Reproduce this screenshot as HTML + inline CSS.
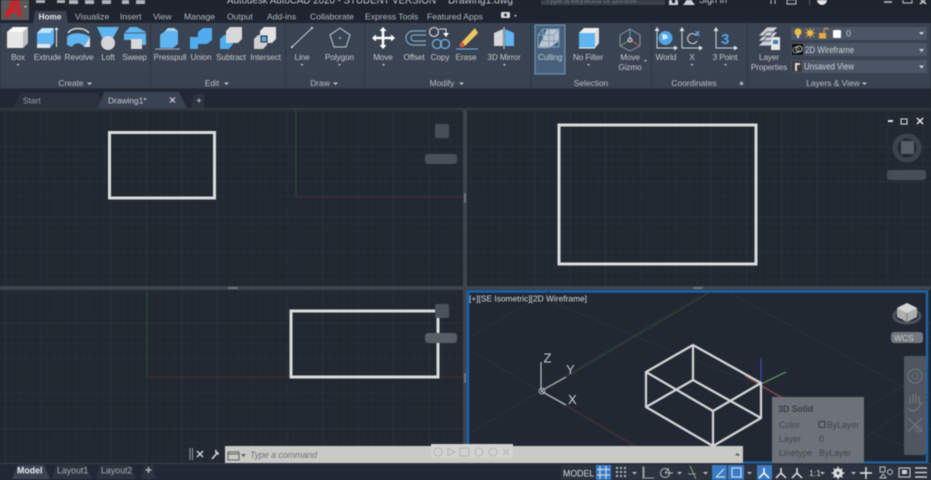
<!DOCTYPE html>
<html><head><meta charset="utf-8">
<style>
html,body{margin:0;padding:0;background:#212830;width:931px;height:480px;overflow:hidden}
svg{display:block;filter:blur(.5px)}
text{font-family:"Liberation Sans",sans-serif;font-size:8.4px;fill:#d2d6da}
.c{text-anchor:middle}
.t{fill:#b4bac2;font-size:8.6px}
.l{fill:#c4c9ce;font-size:8.2px;letter-spacing:-.1px}
.w{fill:none;stroke:#dcdcdc;stroke-width:3}
.g{fill:none;stroke:#d6d6d6;stroke-width:2.2;stroke-linejoin:round}
</style></head><body>
<svg width="931" height="480" viewBox="0 0 931 480" xmlns="http://www.w3.org/2000/svg">
<defs>
<pattern id="grid" width="35.3" height="35.3" patternUnits="userSpaceOnUse" x="5" y="5">
<path d="M7 0V35M14 0V35M21 0V35M28 0V35M0 7H35M0 14H35M0 21H35M0 28H35" stroke="#252c35" stroke-width="1" fill="none"/>
<path d="M0 0V35.3M0 0H35.3" stroke="#303843" stroke-width="1" fill="none"/>
</pattern>
</defs>
<rect width="931" height="480" fill="#212830"/>
<!-- title bar -->
<rect width="931" height="23" fill="#1e232c"/>
<rect x="0" y="10" width="931" height="13" fill="#1f2530"/>
<!-- logo -->
<rect x="1" y="0" width="28" height="20" fill="#59595a"/>
<path d="M4 17L12 0H19L22 17H18L17.300 12.500H12.500L10 17ZM14 9.500H17L16 3.500Z" fill="#c7242b"/>
<path d="M24 6h3l-1.500 2z" fill="#d0d0d0"/>
<g fill="#b0b4b9">
<rect x="36" y="0" width="9" height="3"/><rect x="57" y="0" width="8" height="3"/><rect x="69" y="0" width="9" height="4"/><rect x="85" y="0" width="9" height="4"/><rect x="102" y="0" width="9" height="4"/><rect x="122" y="0" width="7" height="4"/><rect x="136" y="0" width="9" height="4"/>
</g>
<text x="227" y="3.500" textLength="209" lengthAdjust="spacingAndGlyphs" style="font-size:10px;fill:#c9cdd2">Autodesk AutoCAD 2020 - STUDENT VERSION</text>
<text x="448" y="3.500" textLength="65" lengthAdjust="spacingAndGlyphs" style="font-size:10px;fill:#c9cdd2">Drawing1.dwg</text>
<rect x="541" y="0" width="124" height="5" fill="#39404c"/>
<text x="545" y="3" style="font-size:8px;fill:#6f7782">Type a keyword or phrase</text>
<path d="M669 0H672V3H675V0H678V5H669ZM686 0H692V1L695 5H683L686 1Z" fill="#d0d3d6"/>
<text x="699" y="3" style="font-size:9px">Sign In</text>
<path d="M771 0V4M775 0V4M787 0H796V4H787Z" stroke="#c6cace" fill="none"/>
<rect x="809" y="0" width="1" height="5" fill="#555d68"/>
<circle cx="822" cy="0" r="5" fill="#e2e4e6"/>
<path d="M884 2H892" stroke="#ccc" stroke-width="1.500"/><rect x="903" y="-3" width="9" height="6" fill="none" stroke="#ccc"/><path d="M920 -1L926 4M926 -1L920 4" stroke="#ccc" stroke-width="1.500"/>
<!-- menu tabs -->
<path d="M33 23L35 11H66L68 23Z" fill="#3a4352"/>
<text x="50" y="19.500" class="c" style="fill:#e8eaec;font-weight:bold;font-size:8.200px">Home</text>
<text x="75" y="19.500" class="t">Visualize</text>
<text x="120" y="19.500" class="t">Insert</text>
<text x="153" y="19.500" class="t">View</text>
<text x="184" y="19.500" class="t">Manage</text>
<text x="227" y="19.500" class="t">Output</text>
<text x="267" y="19.500" class="t">Add-ins</text>
<text x="310" y="19.500" class="t">Collaborate</text>
<text x="365" y="19.500" class="t">Express Tools</text>
<text x="427" y="19.500" class="t">Featured Apps</text>
<rect x="501" y="12" width="9" height="6" rx="1" fill="#d8dadc"/><circle cx="505.500" cy="15" r="1.500" fill="#333"/><path d="M514 15h3l-1.500 2z" fill="#c6cace"/>
<!-- ribbon -->
<rect x="0" y="23" width="931" height="66" fill="#3a4351"/>
<rect x="0" y="75" width="931" height="14" fill="#394250"/>
<rect x="0" y="88" width="931" height="1" fill="#2b323d"/>
<g stroke="#2e3641"><path d="M150.500 23V89M285.500 23V89M364.500 23V89M531 23V89M651.500 23V89M747.500 23V89"/></g>
<!-- Box -->
<path d="M7 32L13 27H28V43L23 48H7Z" fill="#e6e6e6"/><path d="M7 32L13 27H28L23 32Z" fill="#f8f8f8"/><path d="M23 32L28 27V43L23 48Z" fill="#bdbdbd"/>
<!-- Extrude -->
<path d="M37 33L42 28H54V43L50 48H37Z" fill="#5eb5f0"/><path d="M37 33L42 28H54L50 33Z" fill="#bfe3fa"/><path d="M37 44H50V48H37Z" fill="#e2e6ea"/><path d="M56.500 30V47" stroke="#e5e5e5"/><path d="M56.500 27l2 3h-4z" fill="#e5e5e5"/>
<!-- Revolve -->
<path d="M67 37C70 32 84 32 90 37L90 47L84 47C81 42 75 42 72 47L67 45Z" fill="#5eb5f0"/><path d="M68 33C72 27 84 27 89 33" fill="none" stroke="#d8dce0" stroke-width="1.500"/><path d="M84 47L90 37V47Z" fill="#ddd"/>
<!-- Loft -->
<path d="M97 27H119L112 40H103Z" fill="#5eb5f0"/><circle cx="108" cy="43" r="7" fill="#d6d6d6"/>
<!-- Sweep -->
<path d="M124 33L130 27H137L146 32V45H131V40H124Z" fill="#5eb5f0"/><path d="M124 33H146" stroke="#3a4351" stroke-width=".7"/><rect x="131" y="39" width="11" height="10" fill="#d8d8d8"/>
<!-- Presspull -->
<path d="M160 35L165 31H178V44L173 48H160Z" fill="#5eb5f0"/><path d="M165 31L168 28H174L178 31Z" fill="#a7d6f6"/><path d="M155 49H180" stroke="#aab0b8"/>
<!-- Union -->
<path d="M190 37H198V32L203 28H212V40L207 44H198V49H190Z" fill="#4fadef"/>
<!-- Subtract -->
<path d="M220 39L224 35H233V44L229 49H220Z" fill="#4fadef"/><path d="M226 31L230 27H242V39L238 43H226Z" fill="#d8d8d8"/>
<!-- Intersect -->
<path d="M254 39L258 35H267V45L263 49H254Z" fill="#cfcfcf"/><path d="M260 31L264 27H276V39L272 43H260Z" fill="#e2e2e2"/><rect x="261" y="36" width="6" height="6" fill="#4fadef" stroke="#222"/>
<!-- Line -->
<path d="M292 47L312 28" stroke="#c6cbd0"/><rect x="291" y="46" width="2" height="2" fill="#cfd8e0"/><rect x="311" y="27" width="2" height="2" fill="#cfd8e0"/>
<!-- Polygon -->
<path d="M340 28L350 35L346 47H334L330 35Z" fill="none" stroke="#c6cbd0"/><circle cx="340" cy="38" r="1" fill="#6cc"/>
<!-- Move -->
<path d="M383 28V48M373 38H394" stroke="#fff" stroke-width="2.500"/><path d="M383 27l3.500 4h-7zM383 49l3.500-4h-7zM372 38l4-3.500v7zM395 38l-4-3.500v7z" fill="#fff"/>
<!-- Offset -->
<path d="M426 31H413A7 7 0 0 0 413 45H426M426 35H414A3 3 0 0 0 414 41H426" fill="none" stroke="#7fa8c9" stroke-width="1.200"/>
<!-- Copy -->
<circle cx="434" cy="32" r="4.500" fill="none" stroke="#dfe2e5" stroke-width="1.100"/><path d="M439 29H446V33" fill="none" stroke="#dfe2e5"/><path d="M443 33h6l-3 4z" fill="#fff"/><circle cx="437" cy="44" r="4.500" fill="none" stroke="#6db8ee" stroke-width="1.200"/><circle cx="445" cy="44" r="4.500" fill="none" stroke="#6db8ee" stroke-width="1.200"/>
<!-- Erase -->
<path d="M461 43L475 28L478 33L465 46Z" fill="#f1c65c"/><circle cx="462" cy="45" r="2.500" fill="#d8524a"/><path d="M456 49H478" stroke="#6db8ee"/>
<!-- 3D Mirror -->
<path d="M494 33L503 29V46H494Z" fill="#d8d8d8"/><path d="M505 29L514 33V46H505Z" fill="#5eb5f0"/><path d="M504 27V49" stroke="#c9ced3"/>
<!-- Culling -->
<rect x="535" y="25" width="30" height="49" fill="#47617c" stroke="#6d9cc1"/>
<path d="M538 48L547 29H559V41L549 48Z" fill="#bfc6cc"/><path d="M538 35L543 29H559V47H538ZM538 35H554V47M554 35L559 29M543 29V41H559M549 29V47" fill="none" stroke="#7da1bd"/>
<!-- No Filter -->
<path d="M579 33L584 28H599V43L595 48H579Z" fill="#5eb5f0"/><path d="M579 33L584 28H599L595 33Z" fill="#eee"/><path d="M595 33L599 28V43L595 48Z" fill="#ddd"/><path d="M579 48H595" stroke="#fff"/>
<!-- Gizmo -->
<path d="M630 29L640 35V46L630 51L620 46V35Z" fill="none" stroke="#8b929a"/><path d="M630 29V40" stroke="#5aa6e0"/><path d="M630 40L620 46" stroke="#5fae6c"/><path d="M630 40L640 46" stroke="#c65a5a"/><circle cx="630" cy="40" r="2" fill="none" stroke="#d8d8d8"/>
<!-- Coords -->
<g fill="none" stroke="#cfd5da"><path d="M657 30V48H676"/><path d="M682 30V48H701"/><path d="M716 30V48H736"/></g>
<path d="M657 27l2.500 4h-5zM682 27l2.500 4h-5zM716 27l2.500 4h-5zM678 48l-4-2.500v5zM703 48l-4-2.500v5zM738 48l-4-2.500v5z" fill="#dfe3e6"/>
<circle cx="665.500" cy="38" r="7" fill="#4fa6e6"/><path d="M662 34l5 1 1 3-5 2z" fill="#cfe8fa"/>
<path d="M696 35A5 5 0 1 0 697 41" fill="none" stroke="#cfd5da"/><text x="695" y="36" style="fill:#6bb6ee;font-size:9px;font-weight:bold">x</text>
<text x="721" y="44" style="fill:#4fa6e6;font-size:15px;font-weight:bold">3</text>
<!-- Layer props -->
<path d="M758 36L767 27H778L770 36ZM758 41L767 32H778L770 41ZM758 46L767 37H778L770 46Z" fill="#cfd2d5" stroke="#3a4351" stroke-width=".7"/><rect x="771" y="37" width="9" height="13" fill="#e6e6e6"/><rect x="773" y="40" width="5" height="4" fill="#3d7fb5"/>
<!-- Layer dropdowns -->
<rect x="791" y="27" width="136" height="13" fill="#4b5565"/>
<rect x="791" y="43" width="136" height="13" fill="#4b5565"/>
<rect x="791" y="60" width="136" height="13" fill="#4b5565"/>
<circle cx="798" cy="32" r="3.500" fill="#f1c02f"/><rect x="797" y="35" width="2" height="3" fill="#d8d8d8"/>
<circle cx="810" cy="33" r="3" fill="#f0b93a"/><path d="M810 28V38M805 33H815M806 29L814 37M814 29L806 37" stroke="#f0b93a" stroke-width=".8"/>
<rect x="819" y="33" width="7" height="5.500" fill="#e9a93a"/><path d="M824 33V30A2 2 0 0 1 828 30" fill="none" stroke="#e9a93a"/>
<rect x="833" y="30" width="8" height="8" rx="1" fill="#fff"/>
<text x="846" y="36.500" style="fill:#c6cbd0;font-size:9px">0</text>
<rect x="792" y="44" width="11" height="11" fill="#0b0b0b"/><circle cx="796" cy="50" r="3" fill="none" stroke="#999"/><circle cx="799" cy="49" r="3" fill="none" stroke="#ccc"/>
<text x="805" y="52.800" textLength="49" lengthAdjust="spacingAndGlyphs" style="font-size:8.800px;fill:#ced3d8">2D Wireframe</text>
<rect x="792" y="61" width="10" height="11" fill="#3a3a3a"/><path d="M795 63H800V65H797V71H795Z" fill="#ddd"/>
<text x="804" y="69.500" textLength="50" lengthAdjust="spacingAndGlyphs" style="font-size:8.800px;fill:#ced3d8">Unsaved View</text>
<path d="M919 32h5l-2.500 3zM919 49h5l-2.500 3zM919 65.500h5l-2.500 3z" fill="#cfd3d7"/>
<!-- ribbon labels -->
<g>
<text x="18" y="60" class="c l">Box</text><text x="47.500" y="60" class="c l">Extrude</text><text x="79" y="60" class="c l">Revolve</text><text x="108" y="60" class="c l">Loft</text><text x="134.500" y="60" class="c l">Sweep</text>
<text x="170" y="60" class="c l">Presspull</text><text x="201" y="60" class="c l">Union</text><text x="231" y="60" class="c l">Subtract</text><text x="265.500" y="60" class="c l">Intersect</text>
<text x="302" y="60" class="c l">Line</text><text x="339.500" y="60" class="c l">Polygon</text>
<text x="383" y="60" class="c l">Move</text><text x="414" y="60" class="c l">Offset</text><text x="440" y="60" class="c l">Copy</text><text x="466" y="60" class="c l">Erase</text><text x="504" y="60" class="c l">3D Mirror</text>
<text x="550" y="60" class="c l">Culling</text><text x="588" y="60" class="c l">No Filter</text><text x="630" y="60" class="c l">Move</text><text x="630" y="70" class="c l">Gizmo</text>
<text x="666" y="60" class="c l">World</text><text x="692" y="60" class="c l">X</text><text x="725" y="60" class="c l">3 Point</text>
<text x="769" y="60" class="c l">Layer</text><text x="769" y="70" class="c l">Properties</text>
<text x="71" y="86" class="c" style="fill:#b8bec5">Create</text>
<text x="212" y="86" class="c" style="fill:#b8bec5">Edit</text>
<text x="320" y="86" class="c" style="fill:#b8bec5">Draw</text>
<text x="442" y="86" class="c" style="fill:#b8bec5">Modify</text>
<text x="591" y="86" class="c" style="fill:#b8bec5">Selection</text>
<text x="694" y="86" class="c" style="fill:#b8bec5">Coordinates</text>
<text x="833" y="86" class="c" style="fill:#b8bec5">Layers &amp; View</text>
</g>
<path d="M87 82.500h5l-2.500 2.500zM224 82.500h5l-2.500 2.500zM333 82.500h5l-2.500 2.500zM459 82.500h5l-2.500 2.500zM862 82.500h5l-2.500 2.500z" fill="#c0c5cb"/>
<rect x="740" y="82" width="3" height="3" fill="#aeb4bb"/>
<path d="M16.500 64h3l-1.500 2zM300.500 64h3l-1.500 2zM338 64h3l-1.500 2zM382 64h3l-1.500 2zM503 64h3l-1.500 2zM587 64h3l-1.500 2zM644 60h3l-1.500 2zM690.500 64h3l-1.500 2zM724 64h3l-1.500 2z" fill="#c0c5cb"/>
<!-- file tabs -->
<rect x="0" y="89" width="931" height="20" fill="#222833"/>
<path d="M14 108L20 93H98L104 108Z" fill="#2b323e"/>
<path d="M98 108L104 92H179L187 108Z" fill="#3a4351"/>
<text x="23" y="103.500" style="fill:#9aa1aa">Start</text>
<text x="108" y="103.500" style="fill:#c8cdd2">Drawing1*</text>
<path d="M170 97.500L175 102.500M175 97.500L170 102.500" stroke="#cfd3d7" stroke-width="1.200"/>
<path d="M191 108L193 96Q194 94 200 94H204V108Z" fill="#2e3541"/>
<path d="M197 100.500H201M199 98.500V102.500" stroke="#b5bbc2"/>
<rect x="0" y="108" width="931" height="2" fill="#333a45"/>
<!-- viewports -->
<rect x="0" y="110" width="931" height="353" fill="#212830"/>
<rect x="0" y="110" width="931" height="353" fill="url(#grid)"/>
<!-- dividers -->
<rect x="463" y="110" width="4" height="353" fill="#3f444b"/>
<rect x="0" y="286" width="931" height="4" fill="#3f444b"/>
<rect x="464" y="193" width="2" height="10" fill="#6e737a"/><rect x="464" y="373" width="2" height="10" fill="#6e737a"/>
<rect x="228" y="287" width="10" height="2" fill="#6e737a"/><rect x="693" y="287" width="10" height="2" fill="#6e737a"/>
<!-- axes -->
<path d="M296 110V197" stroke="#2e4d36"/><path d="M296 197H463" stroke="#52292e"/>
<path d="M147 291V377" stroke="#2e4d36"/><path d="M147 377H463" stroke="#52292e"/>
<!-- rects -->
<rect x="109.500" y="132.500" width="105" height="65.500" class="w"/>
<rect x="559" y="125" width="197" height="139" class="w"/>
<rect x="291" y="311" width="147" height="66" class="w"/>
<!-- TL nav -->
<rect x="435" y="124" width="14" height="14" rx="2" fill="#474e57"/>
<rect x="425" y="154" width="32" height="10" rx="3" fill="#4a5059"/>
<!-- TR nav -->
<path d="M888 121H893" stroke="#e4e4e4" stroke-width="2"/><rect x="901" y="119" width="6" height="5" fill="none" stroke="#e4e4e4"/><path d="M917 118L923 124M923 118L917 124" stroke="#e4e4e4" stroke-width="1.500"/>
<circle cx="907" cy="148" r="12" fill="none" stroke="#3c434d" stroke-width="5"/>
<rect x="901" y="141" width="13" height="13" fill="#575e67"/>
<rect x="887" y="170" width="39" height="10" rx="3" fill="#474d56"/>
<!-- BL nav -->
<rect x="435" y="304" width="14" height="14" rx="2" fill="#4b525b"/>
<rect x="425" y="333" width="32" height="10" rx="3" fill="#585e66"/>
<!-- active viewport -->
<rect x="468" y="291.500" width="459" height="171" fill="#212831" stroke="#1567b5" stroke-width="2.400"/>
<g stroke="#2b323c" fill="none"><path d="M470 337L550 291M470 433L700 295M470 350L660 462M552 302L927 455M730 293L927 400M830 462L927 395M780 462L927 370"/></g>
<path d="M566 377L710 292" stroke="#2f4d3a"/><path d="M566 405L663 462" stroke="#512c30"/>
<text x="469" y="301.500" style="font-size:8.400px;fill:#d8dbde">[+][SE Isometric][2D Wireframe]</text>
<!-- UCS -->
<path d="M541 362V390" stroke="#dcdcdc"/><path d="M541 391L566 377" stroke="#b8bcb0" stroke-width="1.200"/><path d="M541 391L566 405" stroke="#d0d0d0" stroke-width="1.200"/>
<circle cx="542" cy="391" r="3" fill="none" stroke="#a9adb0"/>
<text x="543.500" y="362.500" style="font-size:13px;fill:#cfd2d5">Z</text>
<text x="566" y="374" style="font-size:13px;fill:#c2c6c9">Y</text>
<text x="568" y="404" style="font-size:13px;fill:#cfd2d5">X</text>
<!-- axes at box -->
<path d="M761 358V384" stroke="#3c4fd0"/><path d="M761 384L786 372" stroke="#5fa35f" stroke-width="1.200"/><path d="M745 376L784 399" stroke="#a04a4a" stroke-width="1.200"/>
<!-- 3D box -->
<g class="g">
<path d="M693 345L646 372L713 411L761 383Z"/>
<path d="M646 407L713 446L761 418L693 380Z"/>
<path d="M693 345V380M646 372V407M713 411V446M761 383V418"/>
</g>
<!-- viewcube -->
<ellipse cx="907" cy="316" rx="13" ry="7" fill="none" stroke="#4c535c" stroke-width="3"/>
<path d="M907 303L917 308V317L907 322L897 317V308Z" fill="#adb0ae"/><path d="M907 303L917 308L907 313L897 308Z" fill="#d6d7d4"/><path d="M907 313V322" stroke="#7a7d7c"/>
<rect x="891" y="332" width="32" height="11" rx="3" fill="#73787d"/>
<text x="894" y="341" style="font-size:8.500px;fill:#c7cacc">WCS</text>
<!-- nav bar -->
<rect x="904" y="356" width="22" height="99" rx="2" fill="#50565d"/>
<circle cx="915" cy="376" r="7" fill="none" stroke="#666c73" stroke-width="1.500"/><circle cx="915" cy="376" r="3" fill="none" stroke="#666c73"/>
<path d="M910 404V397M913 403V394M916 403V394M919 404V396M908 408Q915 416 922 402" fill="none" stroke="#6e747b" stroke-width="1.300"/>
<path d="M908 418L922 432M922 418L908 432" stroke="#6a7077" stroke-width="1.300"/><circle cx="919" cy="429" r="3" fill="none" stroke="#6e747b"/>
<!-- tooltip -->
<rect x="772" y="397" width="92" height="71" fill="#71767b" opacity=".95"/>
<text x="778" y="412" style="font-size:8.800px;font-weight:bold;fill:#3a3f44">3D Solid</text>
<text x="779" y="428" style="fill:#41464b;font-size:8.800px">Color</text>
<rect x="819" y="421.500" width="6" height="6" rx="1" fill="none" stroke="#33383d"/>
<text x="827" y="428" style="fill:#41464b;font-size:8.800px">ByLayer</text>
<text x="779" y="442" style="fill:#41464b;font-size:8.800px">Layer</text><text x="819" y="442" style="fill:#41464b;font-size:8.800px">0</text>
<text x="779" y="456" style="fill:#41464b;font-size:8.800px">Linetype</text><text x="819" y="456" style="fill:#41464b;font-size:8.800px">ByLayer</text>
<!-- command line -->
<rect x="189.500" y="448" width="1" height="12" fill="#9aa0a6"/><rect x="192" y="448" width="1" height="12" fill="#9aa0a6"/>
<path d="M197 451L203 457M203 451L197 457" stroke="#d4d7da" stroke-width="1.400"/>
<path d="M212 459L218 452M216 450A3 3 0 0 0 219 454" stroke="#d4d7da" stroke-width="1.600" fill="none"/>
<rect x="225" y="446" width="518" height="17" fill="#c9c9c5"/>
<rect x="228" y="452" width="11" height="8" fill="none" stroke="#5b5e60"/><path d="M228 454H239" stroke="#5b5e60"/>
<path d="M241 454h5l-2.500 3z" fill="#5b5e60"/>
<text x="250" y="458" textLength="67" style="font-size:9px;font-style:italic;fill:#71757a">Type a command</text>
<path d="M735 455.500h5l-2.500-2.500z" fill="#55585b"/>
<rect x="431" y="444" width="82" height="14" fill="#d2d2ce"/>
<g fill="none" stroke="#b3b3af" stroke-width="1">
<circle cx="438" cy="452" r="4"/><path d="M448 448V456L455 452Z"/><rect x="460" y="448" width="9" height="8"/><circle cx="479" cy="452" r="4"/><circle cx="493" cy="452" r="4"/><path d="M503 449L509 455M509 449L503 455"/>
</g>
<!-- status -->
<rect x="0" y="463" width="931" height="17" fill="#222833"/>
<rect x="0" y="463" width="931" height="1" fill="#3a414b"/>
<path d="M12 479L18 465H44L50 479Z" fill="#3a4351"/>
<path d="M52 479L56 465H86L92 479Z" fill="#2d3440"/>
<path d="M96 479L100 465H130L136 479Z" fill="#2d3440"/>
<path d="M141 479L145 465H153L156 479Z" fill="#2d3440"/>
<text x="17" y="473.500" style="font-weight:bold;fill:#eceef0;font-size:8.800px">Model</text>
<text x="57" y="473.500" style="fill:#a4abb3;font-size:8.800px">Layout1</text>
<text x="101" y="473.500" style="fill:#a4abb3;font-size:8.800px">Layout2</text>
<path d="M145.500 470H151.500M148.500 467V473" stroke="#c4c9ce" stroke-width="1.200"/>
<rect x="561" y="465" width="370" height="15" fill="#2c333f"/>
<text x="563" y="476.500" style="font-size:8.800px;fill:#d4d8dc">MODEL</text>
<rect x="596" y="465" width="15" height="15" fill="#3a7cc4"/><path d="M600 466V479M606 466V479M597 469.500H610M597 475H610" stroke="#d6e6f4"/>
<g fill="#b9bfc6"><rect x="616" y="467" width="2" height="2"/><rect x="620" y="467" width="2" height="2"/><rect x="624" y="467" width="2" height="2"/><rect x="616" y="471" width="2" height="2"/><rect x="620" y="471" width="2" height="2"/><rect x="624" y="471" width="2" height="2"/><rect x="616" y="475" width="2" height="2"/><rect x="620" y="475" width="2" height="2"/><rect x="624" y="475" width="2" height="2"/></g>
<path d="M632 472h5l-2.500 2.500zM677 472h5l-2.500 2.500zM703 472h5l-2.500 2.500zM747 472h5l-2.500 2.500zM820 472h5l-2.500 2.500zM851 472h5l-2.500 2.500z" fill="#b9bfc6"/>
<path d="M643 466V479M644 467V478H654" fill="none" stroke="#9aa1a9"/>
<circle cx="665" cy="473" r="4.500" fill="none" stroke="#b9bfc6"/><path d="M665 473H673M669 468L665 473" stroke="#b9bfc6"/>
<path d="M690 466L696 479M688 474H696" stroke="#7fa87f"/>
<rect x="712" y="465" width="15" height="15" fill="#3a7cc4"/><path d="M716 477L724 469M716 477H725" stroke="#dfe9f3" fill="none"/>
<rect x="728" y="465" width="16" height="15" fill="#3a7cc4"/><rect x="732" y="468" width="9" height="9" fill="none" stroke="#dfe9f3"/>
<rect x="757" y="465" width="15" height="15" fill="#3a7cc4"/><path d="M764 468V473L759 478M764 473L769 478" stroke="#fff" stroke-width="1.500" fill="none"/>
<path d="M781 468V473L776 478M781 473L786 478M797 468V473L792 478M797 473L802 478" stroke="#e4e6e8" stroke-width="1.500" fill="none"/>
<text x="809" y="476" style="font-size:8.600px;fill:#d4d8dc">1:1</text>
<circle cx="838" cy="473" r="3.500" fill="none" stroke="#e0e2e4" stroke-width="2.500"/><path d="M838 466.500V479.500M831.500 473H844.500M833.500 468.500L842.500 477.500M842.500 468.500L833.500 477.500" stroke="#e0e2e4" stroke-width="1.200"/><circle cx="838" cy="473" r="1.300" fill="#2c333f"/>
<path d="M860 473H872M866 467V479" stroke="#e6e8ea" stroke-width="1.400"/>
<rect x="880" y="467" width="5" height="5" fill="none" stroke="#b9bfc6"/><circle cx="890" cy="472" r="2.500" fill="none" stroke="#b9bfc6"/><path d="M880 478l3-4 3 4z" fill="none" stroke="#b9bfc6"/>
<rect x="899" y="468" width="11" height="9" fill="none" stroke="#d0d4d8"/><rect x="902" y="470" width="5" height="4" fill="#d0d4d8"/>
<path d="M915 468H927M915 472.500H927M915 477H927" stroke="#e0e3e6" stroke-width="1.300"/>
</svg>
</body></html>
